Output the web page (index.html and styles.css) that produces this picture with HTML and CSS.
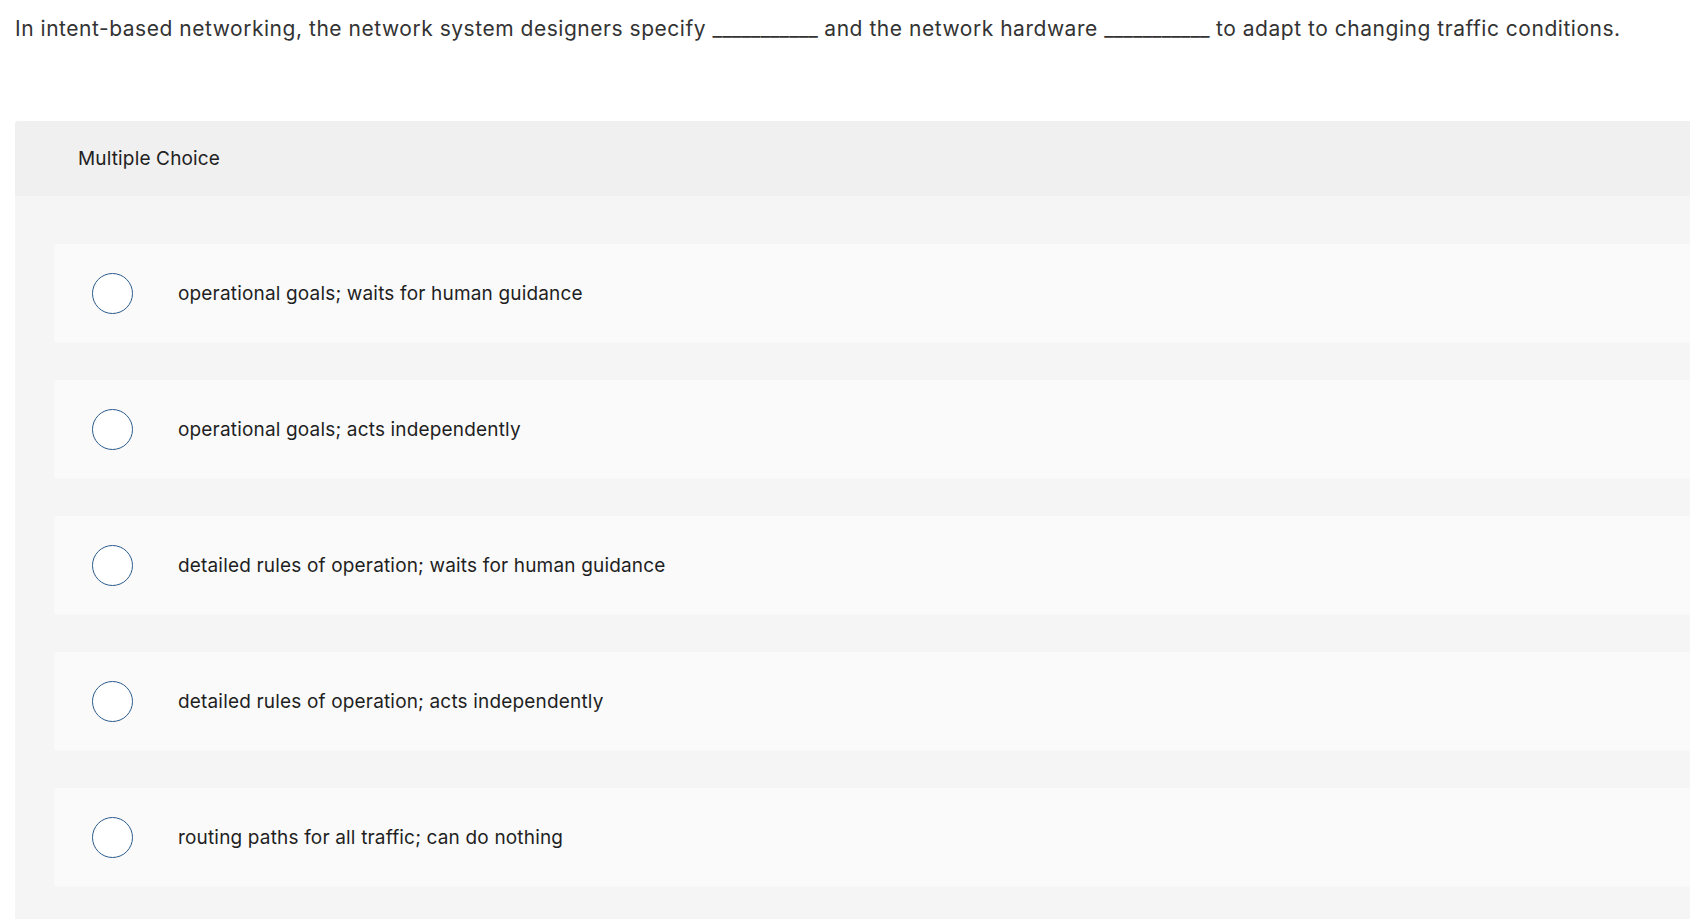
FILE: index.html
```html
<!DOCTYPE html>
<html lang="en">
<head>
<meta charset="utf-8">
<title>Multiple Choice</title>
<link rel="stylesheet" href="styles.css">
</head>
<body>
<div class="page">
  <p class="question">In intent-based networking, the network system designers specify <span class="blank">___________</span> and the network hardware <span class="blank">___________</span> to adapt to changing traffic conditions.</p>
  <section class="mc">
    <header class="mc-header">Multiple Choice</header>
    <div class="mc-body">
      <label class="choice"><span class="radio"></span><span class="choice-text">operational goals; waits for human guidance</span></label>
      <label class="choice"><span class="radio"></span><span class="choice-text">operational goals; acts independently</span></label>
      <label class="choice"><span class="radio"></span><span class="choice-text">detailed rules of operation; waits for human guidance</span></label>
      <label class="choice"><span class="radio"></span><span class="choice-text">detailed rules of operation; acts independently</span></label>
      <label class="choice"><span class="radio"></span><span class="choice-text">routing paths for all traffic; can do nothing</span></label>
    </div>
  </section>
</div>
</body>
</html>
```
FILE: styles.css
```css
html, body {
  margin: 0;
  padding: 0;
  background: #ffffff;
  overflow: hidden;
}
body {
  font-family: Inter, "Open Sans", "Liberation Sans", sans-serif;
  color: #222222;
}
.page {
  padding: 0 0 0 15px;
  width: 1900px;
}
.question {
  margin: 0;
  padding-top: 16px;
  font-size: 21px;
  line-height: 26px;
  letter-spacing: 0.53px;
  color: #333333;
}
.blank {
  letter-spacing: 0;
}
.mc {
  margin-top: 79px;
  background: #f5f5f5;
  border-radius: 3px 0 0 0;
}
.mc-header {
  background: #f0f0f0;
  height: 75px;
  display: flex;
  align-items: center;
  padding-left: 63px;
  font-size: 19px;
  letter-spacing: 0.15px;
  color: #222222;
  border-radius: 3px 0 0 0;
}
.mc-body {
  padding: 48px 0 40px 39px;
  display: flex;
  flex-direction: column;
  gap: 37px;
}
.choice {
  display: flex;
  align-items: center;
  height: 99px;
  background: #fafafa;
  border-radius: 4px;
  padding-left: 38px;
}
.radio {
  width: 39px;
  height: 39px;
  border: 1.5px solid #2a5a8a;
  border-radius: 50%;
  background: #ffffff;
  flex: none;
}
.choice-text {
  margin-left: 45px;
  font-size: 19px;
  letter-spacing: 0.17px;
  color: #1f1f1f;
}
```
